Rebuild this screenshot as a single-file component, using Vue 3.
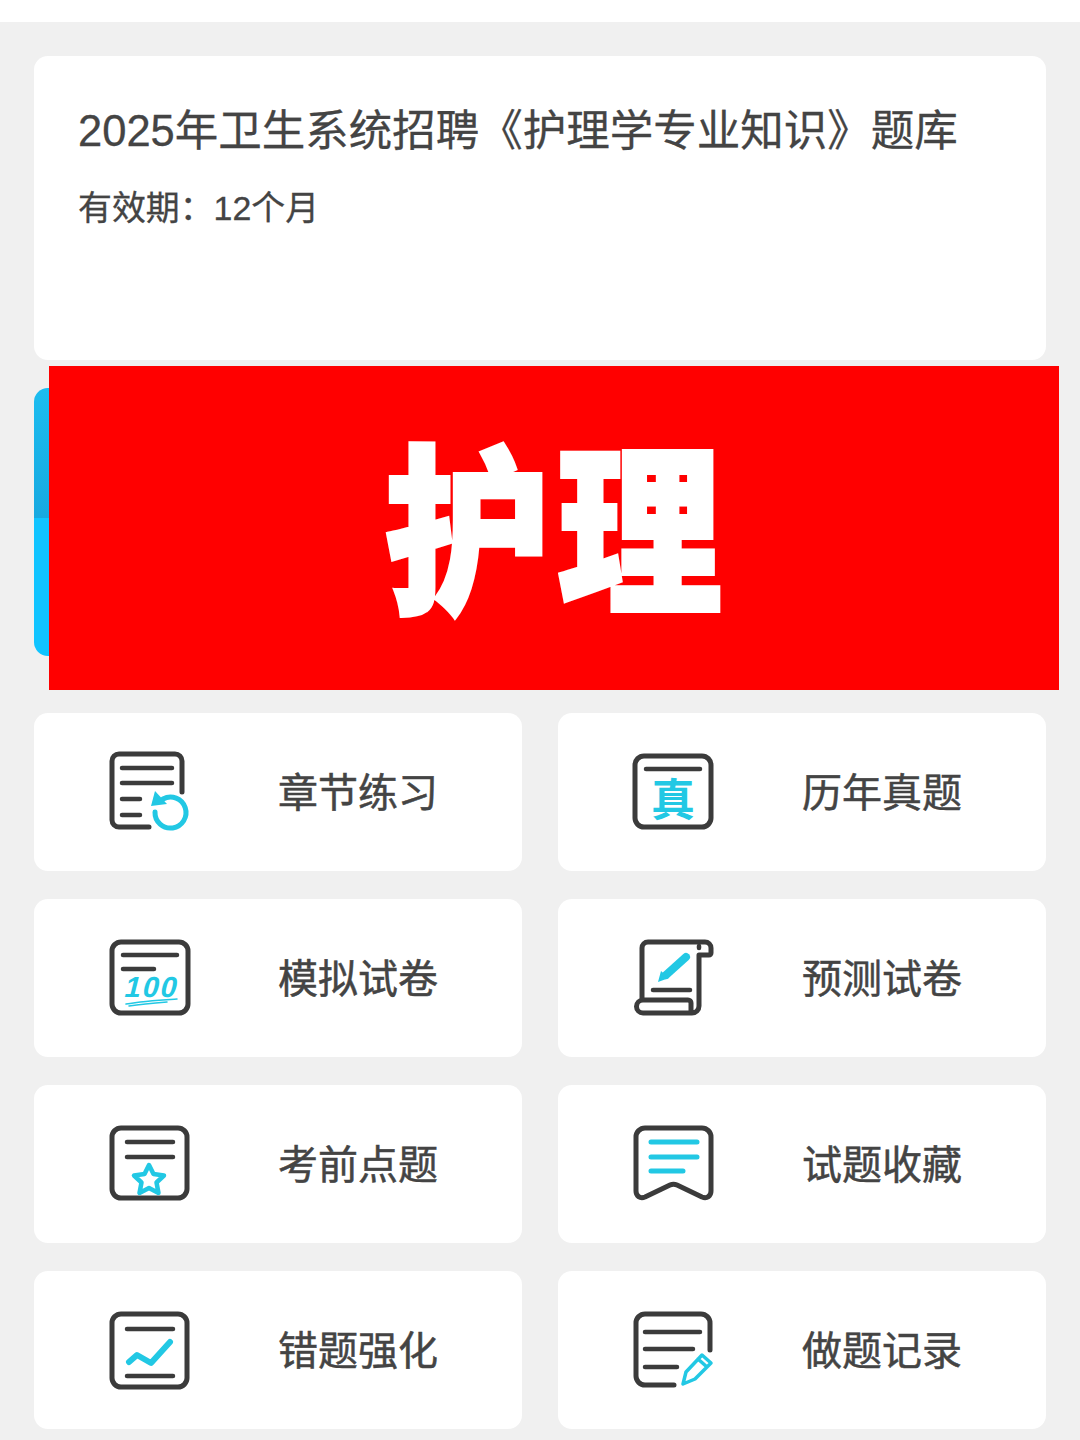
<template>
  <div class="page">
    <div class="topbar"></div>
    <main class="content">
      <section class="info card">
        <h1 class="title">2025年卫生系统招聘《护理学专业知识》题库</h1>
        <p class="valid">有效期：12个月</p>
      </section>

      <section class="banner">
        <div class="banner_top"></div>
        <div class="banner_bottom"></div>
        <div class="cover"><span class="cover_text">护理</span></div>
      </section>

      <div class="grid">
        <div v-for="item in items" :key="item.name" class="tile card">
          <svg class="icon" width="90" height="90" viewBox="0 0 90 90" fill="none">
            <template v-if="item.name === 'chapter'">
              <path class="ink" d="M77 45V14a7 7 0 0 0-7-7H14a7 7 0 0 0-7 7v59a7 7 0 0 0 7 7h30" />
              <path class="ink thin" d="M17 21H67M17 36H67M17 52H35M17 68H35" />
              <path class="cyan" d="M58 52a15.500 15.500 0 1 1-8 13" />
              <path class="fill" d="M50 44L46 59L62 57z" />
            </template>
            <template v-else-if="item.name === 'real'">
              <rect class="ink" x="6" y="9" width="76" height="71" rx="9" />
              <path class="ink thin" d="M17 22H71" />
              <text class="zhen" x="44" y="69">真</text>
            </template>
            <template v-else-if="item.name === 'mock'">
              <rect class="ink" x="7" y="9" width="76" height="71" rx="9" />
              <path class="ink thin" d="M18 22H72M18 36H49" />
              <text class="hundred" x="0" y="0" textLength="52" transform="translate(18 64) skewX(-14)">100</text>
              <path class="cyan hair" d="M21 71C38 68 56 67 72 66M24 73C38 71 50 70 62 69" />
            </template>
            <template v-else-if="item.name === 'predict'">
              <path class="ink" d="M13 67V15a6 6 0 0 1 6-6H76a6 6 0 0 1 6 6v5a2 2 0 0 1-2 2H70v51a7 7 0 0 1-7 7H14a6.500 6.500 0 0 1 0-13H59a3 3 0 0 1 3 3v9" />
              <path class="ink thin" d="M70 15v-2" />
              <path class="ink thin" d="M24 57H61" />
              <path class="pen" d="M57 24L37 42" />
              <path class="fill" d="M29 49l3-11 8 7z" />
            </template>
            <template v-else-if="item.name === 'tips'">
              <rect class="ink" x="7" y="9" width="75" height="70" rx="9" />
              <path class="ink thin" d="M22 23H68M22 38H68" />
              <path class="cyan star" d="M44 46l4.500 9 10.500 1.500-7.500 7 2 10.500-9.500-5-9.500 5 2-10.500-7.500-7 10.500-1.500z" />
            </template>
            <template v-else-if="item.name === 'favorite'">
              <path class="ink" d="M7 18a9 9 0 0 1 9-9H73a9 9 0 0 1 9 9V72c0 5-4 8-9 6L48 66a8 8 0 0 0-7 0L16 78c-5 2-9-1-9-6z" />
              <path class="cyan" d="M22 23H68M22 38H68M22 52H54" />
            </template>
            <template v-else-if="item.name === 'wrong'">
              <rect class="ink" x="7" y="9" width="75" height="73" rx="9" />
              <path class="ink thin" d="M22 24H68M22 71H68" />
              <path class="pen chart" d="M24 57L32 50L46 58L65 37" />
            </template>
            <template v-else>
              <path class="ink" d="M81 45V18a9 9 0 0 0-9-9H16a9 9 0 0 0-9 9v53a9 9 0 0 0 9 9h29" />
              <path class="ink thin" d="M16 27H71M16 44H64M16 62H48" />
              <path class="cyan slim" d="M54 79l3-12 16-17 9 8-16 16zM69 54l9 8" />
            </template>
          </svg>
          <span class="label">{{ item.label }}</span>
        </div>
      </div>
    </main>
  </div>
</template>

<script setup>
const items = [
  { name: 'chapter', label: '章节练习' },
  { name: 'real', label: '历年真题' },
  { name: 'mock', label: '模拟试卷' },
  { name: 'predict', label: '预测试卷' },
  { name: 'tips', label: '考前点题' },
  { name: 'favorite', label: '试题收藏' },
  { name: 'wrong', label: '错题强化' },
  { name: 'record', label: '做题记录' },
]
</script>

<style>
html,
body {
  margin: 0;
  background: #f0f0f0;
}
</style>

<style scoped>
.page {
  width: 1080px;
  height: 1440px;
  overflow: hidden;
  background: #f0f0f0;
  color: #444;
  font-family: "Liberation Sans", "Noto Sans CJK SC", sans-serif;
}

.topbar {
  height: 22px;
  background: #fff;
}

.content {
  display: flex;
  flex-direction: column;
  padding: 34px 34px 0;
}

.card {
  background: #fff;
  border-radius: 14px;
}

.info {
  height: 304px;
  padding: 47px 44px 0;
  box-sizing: border-box;
}

.title {
  margin: 0;
  font-size: 43.500px;
  line-height: 56px;
  font-weight: 400;
  white-space: nowrap;
  -webkit-text-stroke: 0.3px #444;
}

.valid {
  margin: 27px 0 0;
  font-size: 33.900px;
  line-height: 44px;
  -webkit-text-stroke: 0.3px #444;
}

.banner {
  position: relative;
  height: 268px;
  margin-top: 28px;
  border-radius: 14px;
  display: flex;
  flex-direction: column;
}

.banner_top {
  height: 130px;
  border-radius: 14px 14px 0 0;
  background: linear-gradient(#1cbdf0, #17a9e0);
}

.banner_bottom {
  flex: 1;
  border-radius: 0 0 14px 14px;
  background: #10c4ff;
}

.cover {
  position: absolute;
  top: -22px;
  left: 15px;
  width: 1010px;
  height: 324px;
  display: flex;
  align-items: center;
  justify-content: center;
  background: #f00;
}

.cover_text {
  display: block;
  margin: 0 0 16px 6px;
  color: #fff;
  font-family: "Noto Sans CJK SC", sans-serif;
  font-size: 165px;
  font-weight: 900;
  line-height: 1;
  letter-spacing: 7px;
  -webkit-text-stroke: 3.500px #fff;
  transform: scaleY(1.1);
}

.grid {
  display: grid;
  grid-template-columns: 488px 488px;
  grid-auto-rows: 158px;
  column-gap: 36px;
  row-gap: 28px;
  margin-top: 57px;
}

.tile {
  display: flex;
  align-items: center;
  padding-left: 71px;
}

.icon {
  flex: none;
}

.label {
  margin-left: 83px;
  margin-bottom: 5px;
  font-family: "Noto Sans CJK SC", sans-serif;
  font-size: 40px;
  font-weight: 400;
  color: #444;
  -webkit-text-stroke: 0.5px #444;
}

.ink {
  stroke: #3b3b3b;
  stroke-width: 5;
  stroke-linecap: round;
  stroke-linejoin: round;
}

.thin {
  stroke-width: 4.500;
}

.cyan {
  stroke: #22c8e4;
  stroke-width: 5;
  stroke-linecap: round;
  stroke-linejoin: round;
}

.slim {
  stroke-width: 3.500;
}

.hair {
  stroke-width: 1.500;
}

.star {
  stroke-width: 4.500;
}

.fill {
  fill: #22c8e4;
}

.pen {
  stroke: #22c8e4;
  stroke-width: 8;
  stroke-linecap: round;
  stroke-linejoin: round;
}

.chart {
  stroke-width: 6;
}

.zhen {
  fill: #22c8e4;
  font-family: "Noto Sans CJK TC", sans-serif;
  font-size: 44px;
  font-weight: 700;
  text-anchor: middle;
}

.hundred {
  fill: #22c8e4;
  font-family: "Liberation Sans", sans-serif;
  font-size: 29px;
  font-weight: 700;
}
</style>
